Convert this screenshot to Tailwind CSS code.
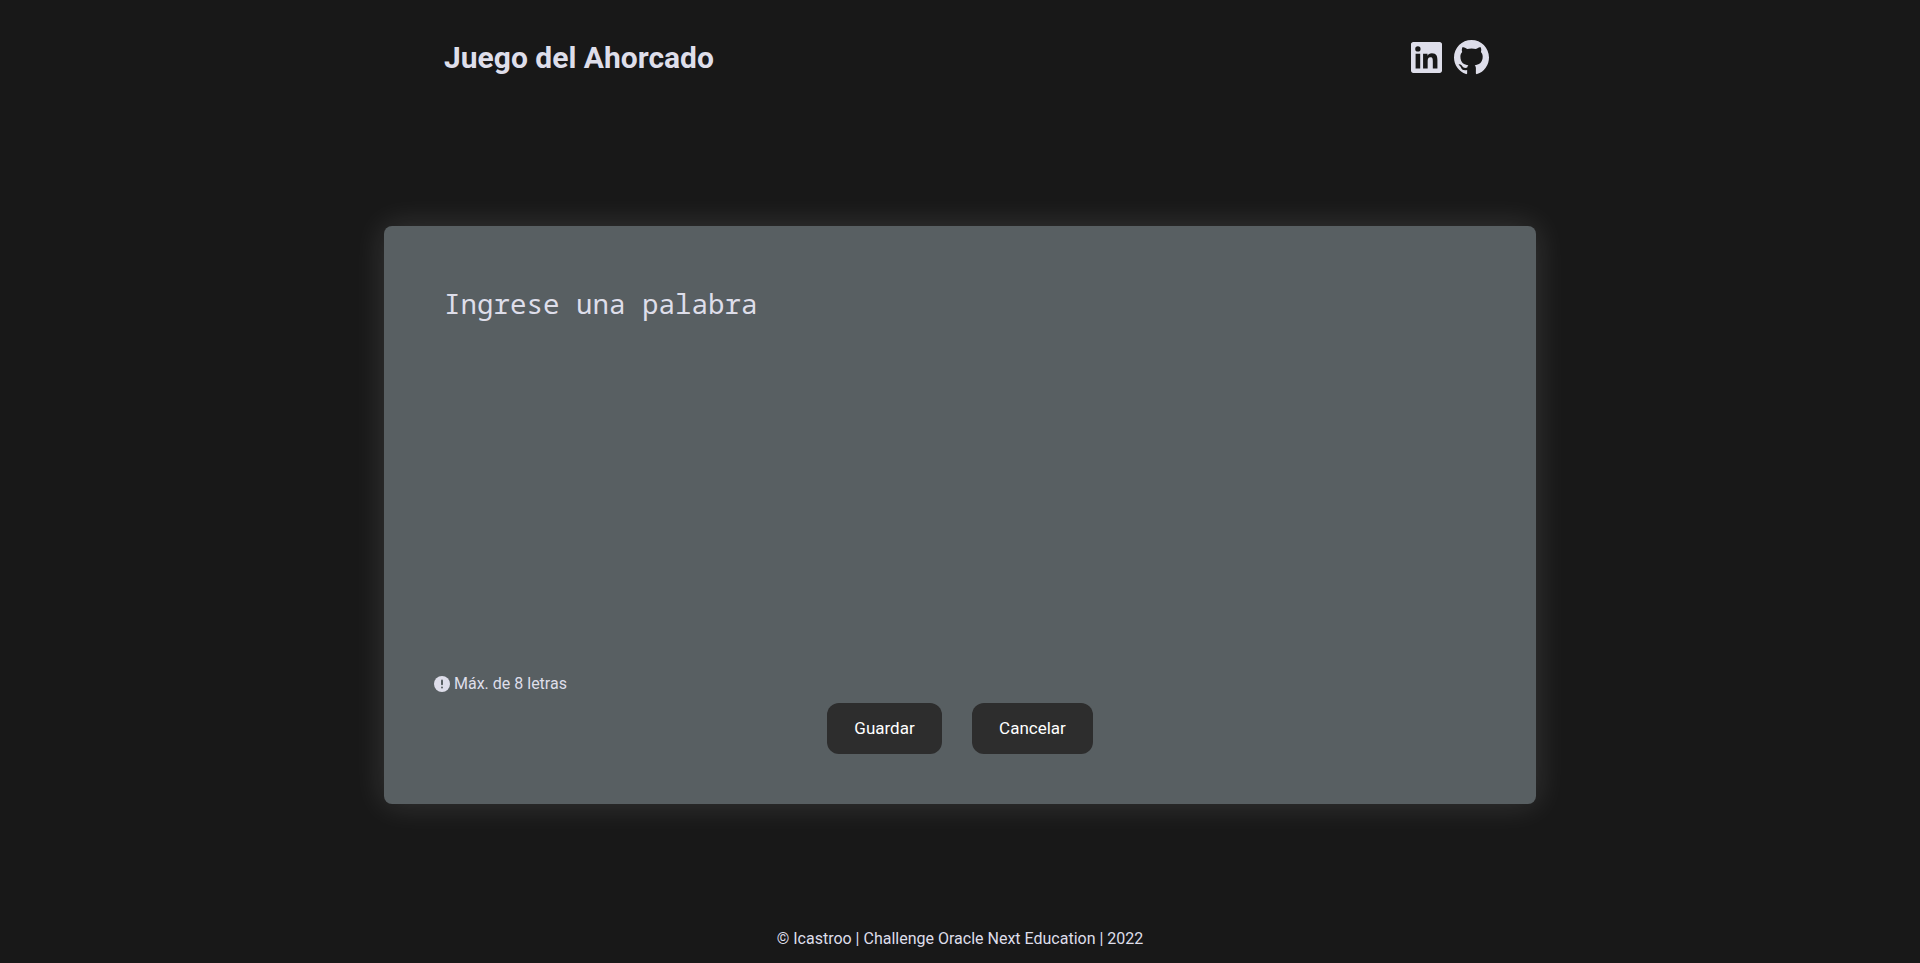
<!DOCTYPE html>
<html lang="es">
<head>
<meta charset="utf-8">
<title>Juego del Ahorcado</title>
<script src="https://cdn.jsdelivr.net/npm/@tailwindcss/browser@4"></script>
</head>
<body class="bg-[#181818] font-[Roboto,sans-serif] text-[#dedeea] h-[963px] overflow-hidden">
<div class="flex flex-col h-full items-center">
  <header class="w-[1152px] h-[114px] flex items-center justify-between pl-[60px] pr-[47px]">
    <h1 class="text-[30px] font-bold leading-none pt-[1px]">Juego del Ahorcado</h1>
    <div class="flex items-center gap-[12px]">
      <svg class="w-[31px] h-[31px]" viewBox="0 0 24 24" fill="#dedeea"><path d="M20.45 20.45h-3.56v-5.57c0-1.33-.02-3.04-1.85-3.04-1.85 0-2.14 1.45-2.14 2.94v5.67H9.35V9h3.41v1.56h.05c.48-.9 1.64-1.85 3.37-1.85 3.6 0 4.27 2.37 4.27 5.46v6.28zM5.34 7.43a2.06 2.06 0 1 1 0-4.13 2.06 2.06 0 0 1 0 4.13zM7.12 20.45H3.56V9h3.56v11.45zM22.22 0H1.77C.79 0 0 .77 0 1.73v20.54C0 23.23.79 24 1.77 24h20.45c.98 0 1.78-.77 1.78-1.73V1.73C24 .77 23.2 0 22.22 0z"/></svg>
      <svg class="w-[35px] h-[35px]" viewBox="0 0 16 16" fill="#dedeea"><path d="M8 0C3.58 0 0 3.58 0 8c0 3.54 2.29 6.53 5.47 7.59.4.07.55-.17.55-.38 0-.19-.01-.82-.01-1.49-2.01.37-2.53-.49-2.69-.94-.09-.23-.48-.94-.82-1.13-.28-.15-.68-.52-.01-.53.63-.01 1.08.58 1.23.82.72 1.21 1.87.87 2.33.66.07-.52.28-.87.51-1.07-1.78-.2-3.64-.89-3.64-3.95 0-.87.31-1.59.82-2.15-.08-.2-.36-1.02.08-2.12 0 0 .67-.21 2.2.82.64-.18 1.32-.27 2-.27s1.36.09 2 .27c1.53-1.04 2.2-.82 2.2-.82.44 1.1.16 1.92.08 2.12.51.56.82 1.27.82 2.15 0 3.07-1.87 3.75-3.65 3.95.29.25.54.73.54 1.48 0 1.07-.01 1.93-.01 2.2 0 .21.15.46.55.38A8.01 8.01 0 0 0 16 8c0-4.42-3.58-8-8-8z"/></svg>
    </div>
  </header>
  <main class="mt-[112px] w-[1152px] h-[578px] bg-[#585f62] rounded-[8px] shadow-[0_0_32px_rgba(255,255,255,0.14)] flex flex-col pl-[50px] pt-[56px]">
    <p class="pl-[10px] font-['Noto_Sans_Mono','DejaVu_Sans_Mono',monospace] text-[27.5px] leading-[44px]">Ingrese una palabra</p>
    <div class="mt-[346px] flex items-center gap-[4px] text-[16px] leading-[24px]">
      <svg class="w-[16px] h-[16px] -mt-[1px]" viewBox="0 0 16 16"><circle cx="8" cy="8" r="8" fill="#dedeea"/><rect x="7" y="3.5" width="2" height="5.8" rx="1" fill="#585f62"/><rect x="7" y="10.4" width="2" height="2" rx="1" fill="#585f62"/></svg>
      <span>Máx. de 8 letras</span>
    </div>
    <div class="mt-[7px] -ml-[50px] flex justify-center gap-[30px] text-white text-[17px] font-normal">
      <button class="w-[115px] h-[51px] rounded-[12px] bg-[#2d2d2d]">Guardar</button>
      <button class="w-[121px] h-[51px] rounded-[12px] bg-[#2d2d2d]">Cancelar</button>
    </div>
  </main>
  <footer class="mt-[123px] text-[16px] leading-[24px]">© Icastroo | Challenge Oracle Next Education | 2022</footer>
</div>
</body>
</html>
